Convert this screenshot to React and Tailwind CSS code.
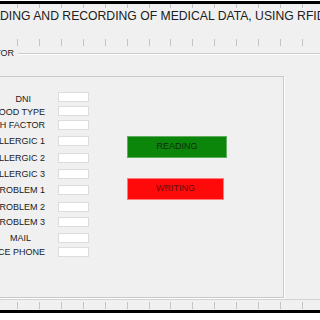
const fields = [
  { label: "DNI", gap: "mt-[15px]", pad: "pr-[14px] translate-y-[2px]", box: "" },
  { label: "BLOOD TYPE", gap: "mt-[4px]", pad: "translate-y-[1px]", box: "" },
  { label: "RH FACTOR", gap: "mt-[4px]", pad: "", box: "" },
  { label: "ALLERGIC 1", gap: "mt-[6px]", pad: "", box: "" },
  { label: "ALLERGIC 2", gap: "mt-[7px]", pad: "", box: "" },
  { label: "ALLERGIC 3", gap: "mt-[6px]", pad: "", box: "" },
  { label: "PROBLEM 1", gap: "mt-[6px]", pad: "", box: "" },
  { label: "PROBLEM 2", gap: "mt-[7px]", pad: "", box: "" },
  { label: "PROBLEM 3", gap: "mt-[5px]", pad: "", box: "ml-[2px]" },
  { label: "MAIL", gap: "mt-[6px]", pad: "pr-[14px]", box: "ml-[2px]" },
  { label: "REFERENCE PHONE", gap: "mt-[4px]", pad: "", box: "ml-[2px]" },
]

function Ticks({ className }) {
  return (
    <div className={`flex justify-between ml-[17px] w-[286px] ${className}`}>
      {Array.from({ length: 14 }).map((_, i) => (
        <div key={i} className="w-px h-full bg-[#c4c4c4]" />
      ))}
    </div>
  )
}

export default function App() {
  return (
    <div className="w-[320px] h-[320px] overflow-hidden bg-[#f0f0f0] flex flex-col font-['Liberation_Sans',Arial,sans-serif] text-[#1e1e1e]">
      <div className="h-px bg-white shrink-0" />
      <div className="h-[3px] bg-black shrink-0" />
      <Ticks className="h-[4px] shrink-0" />

      <div className="mt-[2px] h-[12px] leading-[12px] text-[12.2px] whitespace-nowrap -ml-[25px] shrink-0 text-[#202020]">
        READING AND RECORDING OF MEDICAL DATA, USING RFID
      </div>

      <Ticks className="mt-[17px] h-[7px] shrink-0" />

      <div className="mt-px h-[12px] flex items-center shrink-0">
        <div className="w-[14px] flex justify-end shrink-0">
          <span className="text-[9px] leading-[12px] whitespace-nowrap">MONITOR</span>
        </div>
        <div className="ml-[4px] flex-1 h-px bg-[#cdcdcd] shadow-[0_1px_0_#ffffff]" />
      </div>

      <div className="mt-[17px] w-[284px] h-[222px] shrink-0 border-t border-r border-b border-[#c9c9c9] shadow-[1px_1px_0_#ffffff] flex">
        <div className="flex flex-col w-[91px] shrink-0">
          {fields.map((f) => (
            <div key={f.label} className={`flex items-center h-[10px] ${f.gap}`}>
              <div className={`w-[45px] shrink-0 flex justify-end ${f.pad}`}>
                <span className="text-[9px] leading-[10px] whitespace-nowrap text-[#1a1a1a]">
                  {f.label}
                </span>
              </div>
              <div className={`ml-[13px] w-[31px] h-[10px] bg-white border border-[#dcdcdc] shrink-0 ${f.box}`} />
            </div>
          ))}
        </div>

        <div className="flex flex-col ml-[36px]">
          <div className="mt-[59px] w-[100px] h-[22px] bg-[#0b860b] border border-[#5fae5f] flex items-center justify-center">
            <span className="text-[9px] text-[#0d2d0d]">READING</span>
          </div>
          <div className="mt-[20px] w-[97px] h-[22px] bg-[#fe0a0a] border border-[#ff7a7a] flex items-center justify-center">
            <span className="text-[9px] text-[#6a0a0a]">WRITING</span>
          </div>
        </div>
      </div>

      <div className="mt-px h-px bg-[#d2d2d2] shrink-0" />
      <Ticks className="mt-[2px] h-[7px] shrink-0" />
      <div className="mt-px h-[3px] bg-black shrink-0" />
      <div className="flex-1 bg-white" />
    </div>
  )
}
